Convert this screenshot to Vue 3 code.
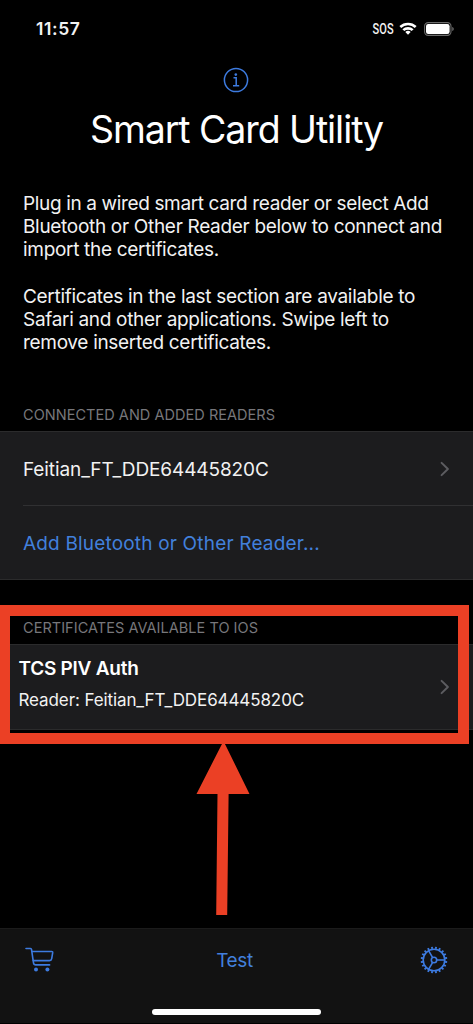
<template>
  <div class="screen">
    <header class="status-bar">
      <span class="status-time">11:57</span>
      <div class="status-icons">
        <span class="status-sos">SOS</span>
        <svg
          class="icon-wifi"
          viewBox="0 0 18 13"
          aria-hidden="true"
        >
          <path d="M0.4 4.1a12.4 12.4 0 0 1 17.2 0L15.8 6a9.8 9.8 0 0 0-13.6 0z" />
          <path d="M3.4 7.2a8.1 8.1 0 0 1 11.2 0L12.7 9.1a5.4 5.4 0 0 0-7.4 0z" />
          <path d="M6.3 10.1a4 4 0 0 1 5.4 0L9 12.8z" />
        </svg>
        <svg
          class="icon-battery"
          viewBox="0 0 30 14"
          aria-hidden="true"
        >
          <rect
            x="0.6"
            y="0.6"
            width="26.4"
            height="12.8"
            rx="3.6"
            fill="none"
            stroke="#6b6b6b"
            stroke-width="1.1"
          />
          <rect
            x="2"
            y="2"
            width="23.6"
            height="10"
            rx="2.2"
            fill="#ffffff"
          />
          <path
            d="M28.3 5v4c.8-.3 1.4-1.1 1.4-2s-.6-1.7-1.4-2z"
            fill="#777777"
          />
        </svg>
      </div>
    </header>

    <main class="content">
      <svg
        class="icon-info"
        viewBox="0 0 26 26"
        role="img"
        aria-label="Info"
      >
        <circle
          cx="13"
          cy="13"
          r="11.6"
        />
        <path d="M10.5 10.8h2.7v7.7M10 18.7h6.2" />
        <circle
          class="dot"
          cx="12.8"
          cy="7.6"
          r="1.3"
        />
      </svg>
      <h1>Smart Card Utility</h1>

      <div class="intro">
        <p>
          <span class="line line--tight">Plug in a wired smart card reader or select Add</span>
          <span class="line">Bluetooth or Other Reader below to connect and</span>
          <span class="line">import the certificates.</span>
        </p>
        <p>
          <span class="line">Certificates in the last section are available to</span>
          <span class="line">Safari and other applications. Swipe left to</span>
          <span class="line">remove inserted certificates.</span>
        </p>
      </div>

      <h2 class="readers-title">
        CONNECTED AND ADDED READERS
      </h2>
      <ul class="list">
        <li class="row">
          <span class="reader-name">{{ reader }}</span>
          <svg
            class="chevron"
            viewBox="0 0 10 16"
            aria-hidden="true"
          >
            <path d="M1.6 1.9L7.9 8L1.6 14.1" />
          </svg>
        </li>
        <li class="row row--link">
          <a class="add-reader">Add Bluetooth or Other Reader...</a>
        </li>
      </ul>

      <h2 class="certs-title">
        CERTIFICATES AVAILABLE TO IOS
      </h2>
      <ul class="list">
        <li class="row row--cert">
          <div class="cert">
            <strong class="cert-name">TCS PIV Auth</strong>
            <span class="cert-reader">Reader: {{ reader }}</span>
          </div>
          <svg
            class="chevron"
            viewBox="0 0 10 16"
            aria-hidden="true"
          >
            <path d="M1.6 1.9L7.9 8L1.6 14.1" />
          </svg>
        </li>
      </ul>
    </main>

    <footer class="toolbar">
      <div class="toolbar-items">
        <svg
          class="icon-cart"
          viewBox="0 0 30 26"
          role="img"
          aria-label="Store"
        >
          <path d="M1 1.5h4.5c.6 0 .9.3 1 .9l2 13.5c.2 1.3.9 2 2.2 2H24.6" />
          <path d="M6.9 4.5H26.6c.9 0 1.2.4 1.1 1.2l-1 6c-.2 1.3-1 1.9-2.2 1.9H8.2" />
          <circle
            cx="11"
            cy="22.6"
            r="2"
          />
          <circle
            cx="22.4"
            cy="22.6"
            r="2"
          />
        </svg>
        <a class="test">Test</a>
        <svg
          class="icon-gear"
          viewBox="-14 -14 28 28"
          role="img"
          aria-label="Settings"
        >
          <circle r="10.8" />
          <circle r="2.7" />
          <path d="M2.7 0H10.8M-1.35-2.34L-5.4-9.35M-1.35 2.34L-5.4 9.35" />
          <path
            v-for="n in 20"
            :key="n"
            class="tooth"
            d="M11.2 0H13.3"
            :transform="`rotate(${n * 18 - 9})`"
          />
        </svg>
      </div>
      <div class="home-indicator" />
    </footer>

    <svg
      class="callout"
      viewBox="0 0 473 1024"
      aria-hidden="true"
    >
      <path
        fill-rule="evenodd"
        d="M0 605H469V744H0zM10 616V733H458V616z"
      />
      <path d="M223.5 741L249.5 794H228.6L227.2 915H216.2L217.5 794H196.5z" />
    </svg>
  </div>
</template>

<script setup>
const reader = 'Feitian_FT_DDE64445820C'
</script>

<style>
body {
  background: #000000;
}
</style>

<style scoped>
.screen {
  position: relative;
  display: flex;
  flex-direction: column;
  width: 473px;
  height: 1024px;
  overflow: hidden;
  background: #000000;
  color: #f2f2f2;
  font-family: Inter, 'Liberation Sans', sans-serif;
  white-space: nowrap;
}

.status-bar {
  display: flex;
  align-items: center;
  justify-content: space-between;
  box-sizing: border-box;
  height: 57px;
  padding: 0 19px 0 36px;
}

.status-time {
  font-size: 17.5px;
  font-weight: 600;
  letter-spacing: 0.6px;
}

.status-icons {
  display: flex;
  align-items: center;
}

.status-sos {
  margin-right: 5px;
  padding-top: 2px;
  font-family: Roboto, sans-serif;
  font-size: 14.5px;
  font-weight: 500;
  line-height: 16px;
  transform: scaleX(0.76);
  transform-origin: right center;
}

.icon-wifi {
  width: 18px;
  height: 13px;
  margin-right: 7px;
  fill: #ffffff;
}

.icon-battery {
  width: 30px;
  height: 14px;
}

.content {
  display: flex;
  flex: 1;
  flex-direction: column;
}

.icon-info {
  align-self: center;
  width: 26px;
  height: 26px;
  margin: 10px 1px 0 0;
  fill: none;
  stroke: #3d7be0;
  stroke-width: 1.5;
}

.icon-info .dot {
  fill: #3d7be0;
  stroke: none;
}

h1 {
  margin: 14px 0 0;
  color: #ffffff;
  font-size: 37.5px;
  font-weight: 400;
  letter-spacing: -1.07px;
  line-height: 46px;
  text-align: center;
}

.intro {
  display: flex;
  flex-direction: column;
  gap: 23.2px;
  margin-top: 39px;
  padding-left: 23px;
  font-size: 19px;
  letter-spacing: -0.31px;
  line-height: 23.2px;
}

.intro p {
  margin: 0;
}

.line {
  display: block;
}

.line--tight {
  letter-spacing: -0.36px;
}

h2 {
  margin: 0;
  padding-left: 23px;
  color: #77777b;
  font-size: 14.5px;
  font-weight: 400;
  letter-spacing: 0.04px;
  line-height: 18px;
}

.readers-title {
  margin-top: 52px;
}

.certs-title {
  margin-top: 39px;
}

.list {
  margin: 7px 0 0;
  padding: 0;
  border-top: 1px solid #2b2b2c;
  border-bottom: 1px solid #2b2b2c;
  background: #1c1c1e;
  list-style: none;
}

.row {
  display: flex;
  align-items: center;
  justify-content: space-between;
  box-sizing: border-box;
  height: 73px;
  padding: 1px 23px 0;
  font-size: 19px;
}

.reader-name {
  letter-spacing: -0.1px;
}

.row--link {
  height: 74px;
  margin-left: 23px;
  padding-left: 0;
  border-top: 1px solid #303032;
  color: #4280dc;
}

.add-reader {
  letter-spacing: 0.18px;
}

.row--cert {
  height: 84px;
  padding: 0 23px 0 18.5px;
}

.chevron {
  width: 10px;
  height: 16px;
  fill: none;
  stroke: #5c5c60;
  stroke-width: 2;
  stroke-linecap: round;
  stroke-linejoin: round;
}

.cert {
  padding-bottom: 6px;
}

.cert-name,
.cert-reader {
  display: block;
}

.cert-name {
  color: #ffffff;
  font-size: 19px;
  font-weight: 600;
  letter-spacing: -0.25px;
  line-height: 24px;
}

.cert-reader {
  margin-top: 8px;
  font-size: 17px;
  letter-spacing: -0.1px;
  line-height: 22px;
}

.toolbar {
  display: flex;
  flex-direction: column;
  align-items: center;
  justify-content: space-between;
  box-sizing: border-box;
  height: 96px;
  padding-bottom: 8px;
  border-top: 1px solid #1b1b1b;
  border-bottom: 1px solid #000000;
  background: #121212;
}

.toolbar-items {
  display: flex;
  align-items: center;
  justify-content: space-between;
  box-sizing: border-box;
  width: 100%;
  height: 62px;
  padding: 0 25px;
}

.test {
  margin-right: 6px;
  color: #4280dc;
  font-size: 19px;
  letter-spacing: -0.4px;
}

.icon-cart {
  width: 30px;
  height: 26px;
  fill: none;
  stroke: #3d7be0;
  stroke-width: 1.6;
  stroke-linecap: round;
  stroke-linejoin: round;
}

.icon-cart circle {
  fill: #3d7be0;
  stroke: none;
}

.icon-gear {
  width: 28px;
  height: 28px;
  fill: none;
  stroke: #3d7be0;
  stroke-width: 1.6;
}

.icon-gear .tooth {
  stroke-width: 1.8;
}

.home-indicator {
  width: 169px;
  height: 6px;
  border-radius: 3px;
  background: #ffffff;
}

.callout {
  position: absolute;
  top: 0;
  left: 0;
  width: 473px;
  height: 1024px;
  fill: #eb4025;
  pointer-events: none;
}
</style>
